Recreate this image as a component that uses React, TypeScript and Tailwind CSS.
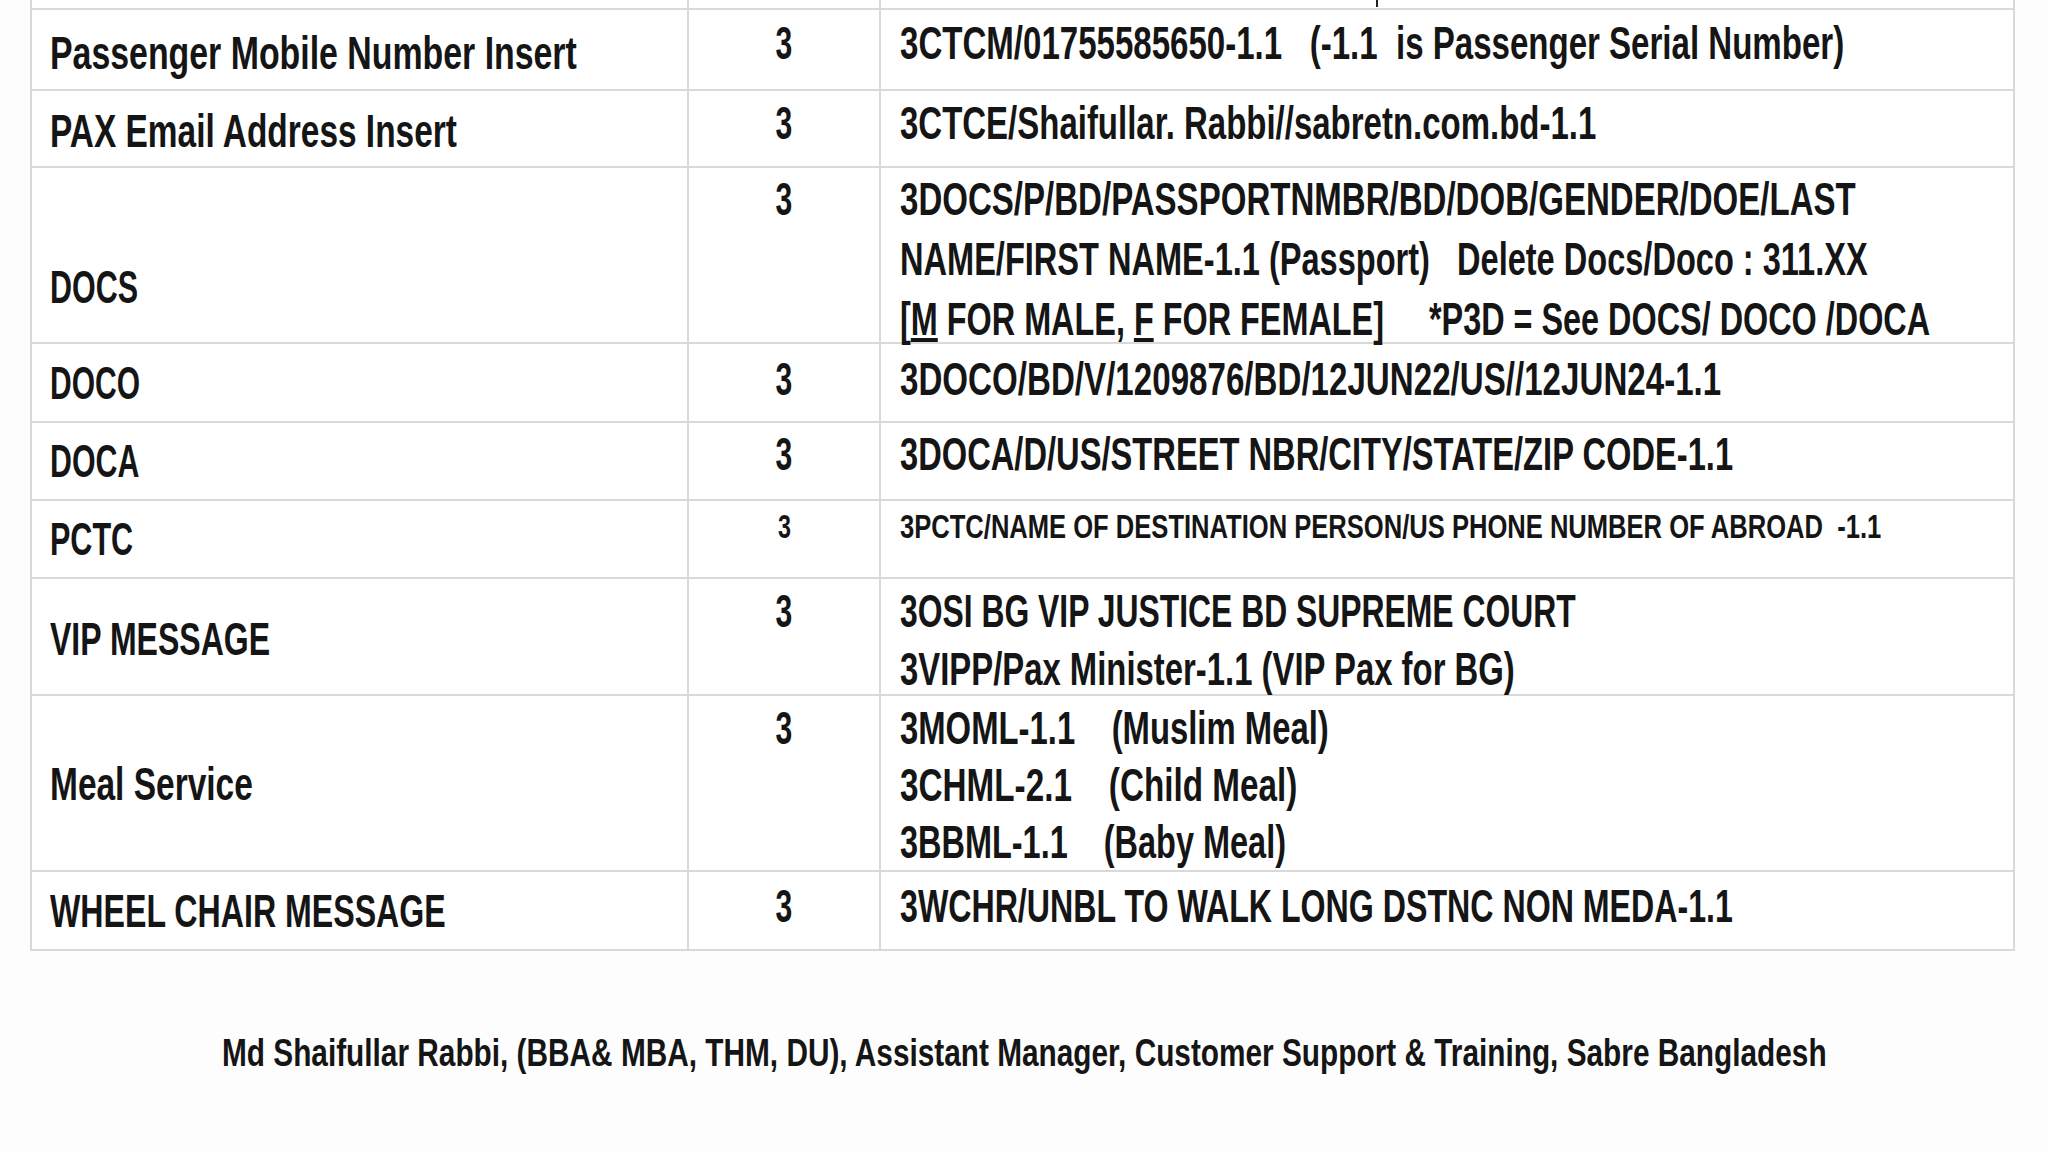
import { useLayoutEffect, useRef, useState, type ReactNode } from "react";

// squeezes a line of text horizontally to the width it has in the sheet
function Fit({
  w,
  center = false,
  children,
}: {
  w: number;
  center?: boolean;
  children: ReactNode;
}) {
  const ref = useRef<HTMLSpanElement>(null);
  const [s, setS] = useState(0.75);

  useLayoutEffect(() => {
    const el = ref.current;
    if (!el) return;
    const fit = () => setS(w / el.offsetWidth);
    fit();
    document.fonts?.ready.then(fit);
  }, [w]);

  return (
    <span
      ref={ref}
      className={
        center
          ? "inline-block origin-center whitespace-pre"
          : "inline-block origin-left whitespace-pre"
      }
      style={{ transform: `scaleX(${s})` }}
    >
      {children}
    </span>
  );
}

type Row = {
  label: string;
  labelW: number;
  labelPad?: string;
  h: string;
  pt: string;
  leading: string;
  small?: boolean;
  lines: [ReactNode, number][];
};

const rows: Row[] = [
  {
    label: "Passenger Mobile Number Insert",
    labelW: 527,
    labelPad: "pt-[6px]",
    h: "h-[81px]",
    pt: "pt-[3px]",
    leading: "leading-[60px]",
    lines: [["3CTCM/01755585650-1.1   (-1.1  is Passenger Serial Number)", 944]],
  },
  {
    label: "PAX Email Address Insert",
    labelW: 407,
    labelPad: "pt-[4px]",
    h: "h-[77px]",
    pt: "pt-[2px]",
    leading: "leading-[60px]",
    lines: [["3CTCE/Shaifullar. Rabbi//sabretn.com.bd-1.1", 696]],
  },
  {
    label: "DOCS",
    labelW: 88,
    labelPad: "pt-[56px]",
    h: "h-[176px]",
    pt: "pt-[1px]",
    leading: "leading-[60px]",
    lines: [
      ["3DOCS/P/BD/PASSPORTNMBR/BD/DOB/GENDER/DOE/LAST", 956],
      ["NAME/FIRST NAME-1.1 (Passport)   Delete Docs/Doco : 311.XX", 968],
      [
        <>
          [<span className="underline">M</span> FOR MALE,{" "}
          <span className="underline">F</span> FOR FEMALE]{"     "}*P3D = See DOCS/ DOCO /DOCA
        </>,
        1030,
      ],
    ],
  },
  {
    label: "DOCO",
    labelW: 90,
    h: "h-[79px]",
    pt: "pt-[5px]",
    leading: "leading-[60px]",
    lines: [["3DOCO/BD/V/1209876/BD/12JUN22/US//12JUN24-1.1", 821]],
  },
  {
    label: "DOCA",
    labelW: 89,
    h: "h-[78px]",
    pt: "pt-[1px]",
    leading: "leading-[60px]",
    lines: [["3DOCA/D/US/STREET NBR/CITY/STATE/ZIP CODE-1.1", 833]],
  },
  {
    label: "PCTC",
    labelW: 83,
    h: "h-[78px]",
    pt: "pt-[2px]",
    leading: "leading-[46px]",
    small: true,
    lines: [["3PCTC/NAME OF DESTINATION PERSON/US PHONE NUMBER OF ABROAD  -1.1", 981]],
  },
  {
    label: "VIP MESSAGE",
    labelW: 220,
    h: "h-[117px]",
    pt: "pt-[3px]",
    leading: "leading-[58px]",
    lines: [
      ["3OSI BG VIP JUSTICE BD SUPREME COURT", 676],
      ["3VIPP/Pax Minister-1.1 (VIP Pax for BG)", 615],
    ],
  },
  {
    label: "Meal Service",
    labelW: 203,
    h: "h-[176px]",
    pt: "pt-[4px]",
    leading: "leading-[57px]",
    lines: [
      ["3MOML-1.1    (Muslim Meal)", 429],
      ["3CHML-2.1    (Child Meal)", 397],
      ["3BBML-1.1    (Baby Meal)", 386],
    ],
  },
  {
    label: "WHEEL CHAIR MESSAGE",
    labelW: 396,
    h: "h-[79px]",
    pt: "pt-[4px]",
    leading: "leading-[60px]",
    lines: [["3WCHR/UNBL TO WALK LONG DSTNC NON MEDA-1.1", 833]],
  },
];

export default function App() {
  return (
    <div className="min-h-[1152px] w-full overflow-hidden bg-[#fdfdfd] font-['Liberation_Sans',Arial,sans-serif] font-bold text-[#151515]">
      <div className="ml-[30px] w-[1985px] border-l-2 border-[#d9d9d9] bg-white">
        <div className="grid h-[10px] grid-cols-[657px_192px_1134px] border-b-2 border-[#d9d9d9]">
          <div className="border-r-2 border-[#d9d9d9]" />
          <div className="border-r-2 border-[#d9d9d9]" />
          <div className="border-r-2 border-[#d9d9d9]">
            <div className="ml-[495px] h-[7px] w-[2px] bg-[#222]" />
          </div>
        </div>

        {rows.map((row) => (
          <div
            key={row.label}
            className={`grid grid-cols-[657px_192px_1134px] border-b-2 border-[#d9d9d9] ${row.h}`}
          >
            <div
              className={`flex items-center border-r-2 border-[#d9d9d9] pl-[18px] text-[46px] leading-[60px] ${row.labelPad ?? ""}`}
            >
              <Fit w={row.labelW}>{row.label}</Fit>
            </div>
            <div
              className={`flex justify-center border-r-2 border-[#d9d9d9] ${row.pt} ${row.leading} ${
                row.small ? "text-[34px]" : "text-[46px]"
              }`}
            >
              <div>
                <Fit w={row.small ? 13 : 17} center>
                  3
                </Fit>
              </div>
            </div>
            <div
              className={`flex flex-col border-r-2 border-[#d9d9d9] pl-[19px] ${row.pt} ${row.leading} ${
                row.small ? "text-[34px]" : "text-[46px]"
              }`}
            >
              {row.lines.map(([text, w], i) => (
                <div key={i}>
                  <Fit w={w}>{text}</Fit>
                </div>
              ))}
            </div>
          </div>
        ))}
      </div>

      <div className="mt-[80px] flex justify-center text-[38px] leading-[44px]">
        <Fit w={1605} center>
          Md Shaifullar Rabbi, (BBA& MBA, THM, DU), Assistant Manager, Customer Support &amp; Training, Sabre Bangladesh
        </Fit>
      </div>
    </div>
  );
}
